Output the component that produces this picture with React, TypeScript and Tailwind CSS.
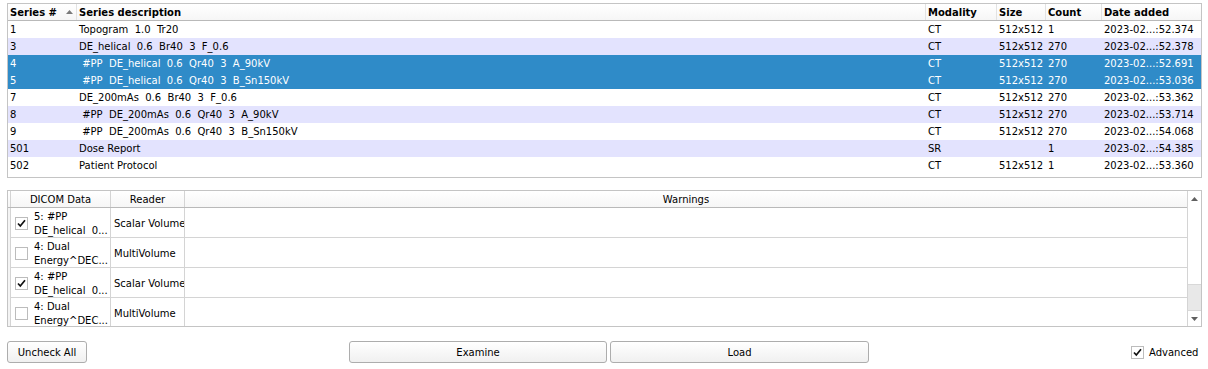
import React from 'react';

const font = { fontFamily: '"DejaVu Sans", Verdana, sans-serif' };

type Series = { num: string; desc: string; mod: string; size: string; count: string; date: string };

const series: Series[] = [
  { num: '1', desc: 'Topogram  1.0  Tr20', mod: 'CT', size: '512x512', count: '1', date: '2023-02...:52.374' },
  { num: '3', desc: 'DE_helical  0.6  Br40  3  F_0.6', mod: 'CT', size: '512x512', count: '270', date: '2023-02...:52.378' },
  { num: '4', desc: ' #PP  DE_helical  0.6  Qr40  3  A_90kV', mod: 'CT', size: '512x512', count: '270', date: '2023-02...:52.691' },
  { num: '5', desc: ' #PP  DE_helical  0.6  Qr40  3  B_Sn150kV', mod: 'CT', size: '512x512', count: '270', date: '2023-02...:53.036' },
  { num: '7', desc: 'DE_200mAs  0.6  Br40  3  F_0.6', mod: 'CT', size: '512x512', count: '270', date: '2023-02...:53.362' },
  { num: '8', desc: ' #PP  DE_200mAs  0.6  Qr40  3  A_90kV', mod: 'CT', size: '512x512', count: '270', date: '2023-02...:53.714' },
  { num: '9', desc: ' #PP  DE_200mAs  0.6  Qr40  3  B_Sn150kV', mod: 'CT', size: '512x512', count: '270', date: '2023-02...:54.068' },
  { num: '501', desc: 'Dose Report', mod: 'SR', size: '', count: '1', date: '2023-02...:54.385' },
  { num: '502', desc: 'Patient Protocol', mod: 'CT', size: '512x512', count: '1', date: '2023-02...:53.360' },
];

const selected = [2, 3];

const loadables = [
  { l1: '5: #PP', l2: 'DE_helical  0...', reader: 'Scalar Volume', checked: true },
  { l1: '4: Dual', l2: 'Energy^DEC...', reader: 'MultiVolume', checked: false },
  { l1: '4: #PP', l2: 'DE_helical  0...', reader: 'Scalar Volume', checked: true },
  { l1: '4: Dual', l2: 'Energy^DEC...', reader: 'MultiVolume', checked: false },
];

const cols = 'grid grid-cols-[69px_849px_71px_49px_56px_1fr]';

function Check({ checked }: { checked: boolean }) {
  return (
    <div className="w-[13px] h-[13px] border border-[#bcbcbc] bg-white flex items-center justify-center shrink-0">
      {checked && (
        <svg width="9" height="9" viewBox="0 0 9 9">
          <path d="M1 4.5 L3.3 7 L8 1.2" fill="none" stroke="#111" strokeWidth="1.7" />
        </svg>
      )}
    </div>
  );
}

function Button({ label, className }: { label: string; className: string }) {
  return (
    <button
      className={`h-[22px] rounded-[3px] border border-[#adadad] bg-gradient-to-b from-white to-[#f0f0f0] text-[10px] text-black ${className}`}
    >
      {label}
    </button>
  );
}

export default function App() {
  return (
    <div className="w-[1208px] h-[369px] bg-white text-[10px] text-black px-[7px] pt-[3px] flex flex-col" style={font}>
      {/* series table */}
      <div className="border border-[#c4c4c4] h-[175px] overflow-hidden w-[1195px]">
        <div className={`${cols} h-[17px] border-b border-[#b9b9b9] bg-gradient-to-b from-white to-[#f6f6f6] font-bold`}>
          <div className="flex items-center justify-between pl-[2px] pr-[3px] border-r border-[#e2e2e2]">
            <span>Series #</span>
            <svg width="7" height="4" viewBox="0 0 7 4">
              <path d="M0 4 L3.5 0 L7 4 Z" fill="#7a7a7a" />
            </svg>
          </div>
          <div className="flex items-center pl-[2px] border-r border-[#e2e2e2]">Series description</div>
          <div className="flex items-center pl-[2px] border-r border-[#e2e2e2]">Modality</div>
          <div className="flex items-center pl-[2px] border-r border-[#e2e2e2]">Size</div>
          <div className="flex items-center pl-[2px] border-r border-[#e2e2e2]">Count</div>
          <div className="flex items-center pl-[2px]">Date added</div>
        </div>
        {series.map((s, i) => {
          const sel = selected.includes(i);
          const bg = sel ? 'bg-[#2f8bc8] text-white' : i % 2 === 1 ? 'bg-[#e3e3fe]' : 'bg-white';
          return (
            <div key={s.num} className={`${cols} h-[17px] items-center whitespace-pre ${bg}`}>
              <div className="pl-[2px]">{s.num}</div>
              <div className="pl-[2px]">{s.desc}</div>
              <div className="pl-[2px]">{s.mod}</div>
              <div className="pl-[2px]">{s.size}</div>
              <div className="pl-[2px]">{s.count}</div>
              <div className="pl-[2px] overflow-hidden">{s.date}</div>
            </div>
          );
        })}
      </div>

      {/* loadables table */}
      <div className="mt-[12px] border border-[#c4c4c4] h-[137px] w-[1195px] flex overflow-hidden">
        <div className="flex-1 flex flex-col overflow-hidden">
          <div className="grid grid-cols-[3px_100px_74px_1fr] h-[17px] border-b border-[#b9b9b9] bg-gradient-to-b from-white to-[#f6f6f6] shrink-0">
            <div className="border-r border-[#d4d4d4]" />
            <div className="flex items-center justify-center border-r border-[#d4d4d4]">DICOM Data</div>
            <div className="flex items-center justify-center border-r border-[#d4d4d4]">Reader</div>
            <div className="flex items-center justify-center">Warnings</div>
          </div>
          {loadables.map((r, i) => (
            <div key={i} className="grid grid-cols-[3px_100px_74px_1fr] h-[30px] shrink-0 border-b border-[#d4d4d4]">
              <div className="border-r border-[#d4d4d4] bg-[#f4f4f4]" />
              <div className="flex items-center pl-[4px] gap-[6px] border-r border-[#d4d4d4]">
                <Check checked={r.checked} />
                <div className="leading-[14px] pt-[2px] whitespace-pre">
                  <div>{r.l1}</div>
                  <div>{r.l2}</div>
                </div>
              </div>
              <div className="flex items-center pl-[3px] whitespace-nowrap overflow-hidden border-r border-[#d4d4d4]">{r.reader}</div>
              <div />
            </div>
          ))}
        </div>
        {/* scrollbar */}
        <div className="w-[14px] border-l border-[#d4d4d4] flex flex-col bg-white">
          <div className="h-[16px] flex items-center justify-center">
            <svg width="7" height="4" viewBox="0 0 7 4">
              <path d="M0 4 L3.5 0 L7 4 Z" fill="#606060" />
            </svg>
          </div>
          <div className="flex-1" />
          <div className="h-[27px] bg-[#e8e8e8] border-y border-[#d8d8d8]" />
          <div className="h-[15px] flex items-center justify-center">
            <svg width="7" height="4" viewBox="0 0 7 4">
              <path d="M0 0 L3.5 4 L7 0 Z" fill="#606060" />
            </svg>
          </div>
        </div>
      </div>

      {/* buttons */}
      <div className="mt-[14px] flex items-center w-[1195px]">
        <Button label="Uncheck All" className="w-[80px]" />
        <Button label="Examine" className="w-[258px] ml-[262px]" />
        <Button label="Load" className="w-[259px] ml-[3px]" />
        <div className="flex items-center gap-[5px] ml-[262px]">
          <Check checked />
          <span>Advanced</span>
        </div>
      </div>
    </div>
  );
}
